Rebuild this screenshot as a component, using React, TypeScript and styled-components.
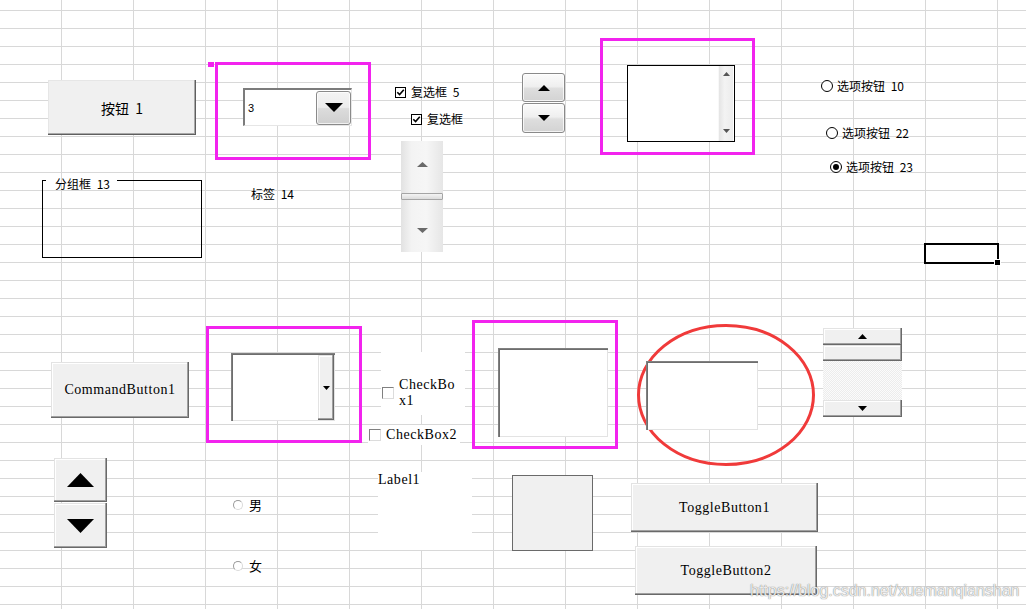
import React from 'react';
import styled, { createGlobalStyle, css } from 'styled-components';

const Global = createGlobalStyle`
  html, body { margin: 0; padding: 0; background: #fff; }
  body {
    width: 1026px; height: 609px; overflow: hidden;
    font-family: "Noto Sans CJK SC", "Noto Sans", sans-serif;
    color: #000;
  }
`;

type Box = { $x: number; $y: number; $w?: number; $h?: number };

const place = css<Box>`
  position: absolute;
  left: ${(p) => p.$x}px;
  top: ${(p) => p.$y}px;
  ${(p) => (p.$w !== undefined ? `width: ${p.$w}px;` : '')}
  ${(p) => (p.$h !== undefined ? `height: ${p.$h}px;` : '')}
  box-sizing: border-box;
`;

const axRaised = css`
  background: #f0f0f0;
  box-shadow: inset -1px -1px 0 #696969, inset -2px -2px 0 #a0a0a0,
    inset 1px 1px 0 #e3e3e3, inset 2px 2px 0 #ffffff;
`;

const axSunken = css`
  background: #fff;
  box-shadow: inset 1px 1px 0 #808080, inset 2px 2px 0 #6e6e6e,
    inset -1px -1px 0 #e3e3e3;
`;

const caption = css`
  font-family: "Liberation Serif", "DejaVu Serif", serif;
  font-size: 14px;
  letter-spacing: 0.55px;
`;

/* ---------- sheet ---------- */
const Sheet = styled.div`
  position: relative;
  width: 1026px;
  height: 609px;
  overflow: hidden;
  background-color: #fff;
  background-image: linear-gradient(to right, #d8d8d8 0 1px, transparent 1px),
    linear-gradient(to bottom, #d8d8d8 0 1px, transparent 1px);
  background-size: 72px 18px;
  background-position: 61px 10px;
`;

/* ---------- generic drawing ---------- */
const TriSvg = styled.svg`
  display: block;
  flex: none;
`;

const Tri = ({ dir, w, h, color = '#000' }: { dir: 'up' | 'down'; w: number; h: number; color?: string }) => (
  <TriSvg width={w} height={h} viewBox={`0 0 ${w} ${h}`}>
    <polygon
      points={dir === 'up' ? `0,${h} ${w / 2},0 ${w},${h}` : `0,0 ${w},0 ${w / 2},${h}`}
      fill={color}
    />
  </TriSvg>
);

/* ---------- annotations ---------- */
const SelectFrame = styled.div<Box>`
  ${place}
  border: 3px solid #f223ee;
`;

const FrameHandle = styled.div<Box>`
  ${place}
  background: #f223ee;
`;

const EllipseSvg = styled.svg<Box>`
  ${place}
  overflow: visible;
`;

/* ---------- form controls ---------- */
const FormButton = styled.div<Box>`
  ${place}
  display: flex;
  align-items: center;
  justify-content: center;
  background: #f0f0f0;
  box-shadow: inset -1px -1px 0 #5f5f5f, inset -2px -2px 0 #a9a9a9, inset 1px 1px 0 #e6e6e6;
  font-size: 14px;
  word-spacing: 3px;
`;

const FormCombo = styled.div<Box>`
  ${place}
  display: flex;
  align-items: center;
  background: #fff;
  border-top: 2px solid #7c7c7c;
  border-left: 2px solid #7c7c7c;
  border-right: 1px solid #e6e6e6;
  border-bottom: 1px solid #e6e6e6;
`;

const ComboValue = styled.span`
  flex: 1;
  padding-left: 3px;
  font-family: "Liberation Sans", Arial, sans-serif;
  font-size: 11px;
`;

const ComboDrop = styled.div`
  width: 35px;
  height: 34px;
  box-sizing: border-box;
  border: 1px solid #8a8a8a;
  border-radius: 3px;
  background: linear-gradient(#f4f4f4, #ececec 48%, #dcdcdc 52%, #cfcfcf);
  box-shadow: inset 0 0 0 1px rgba(255, 255, 255, 0.7);
  display: flex;
  align-items: center;
  justify-content: center;
`;

const FormCheck = styled.div<Box>`
  ${place}
  display: flex;
  align-items: center;
  gap: 5px;
  height: 14px;
  font-size: 12px;
  line-height: 14px;
  word-spacing: 3px;
  white-space: nowrap;
`;

const CheckSquare = styled.span`
  width: 11px;
  height: 11px;
  box-sizing: border-box;
  border: 1px solid #000;
  background: #fff;
  display: flex;
  align-items: center;
  justify-content: center;
`;

const CheckMark = () => (
  <TriSvg width={9} height={9} viewBox="0 0 9 9">
    <path d="M1.3 4.2 L3.6 6.6 L7.8 1.8" fill="none" stroke="#000" strokeWidth={1.6} />
  </TriSvg>
);

const FormVScroll = styled.div<Box>`
  ${place}
  display: flex;
  flex-direction: column;
  background: linear-gradient(to right, #e2e2e2, #f3f3f3 25%, #f6f6f6 60%, #e6e6e6);
`;

const VScrollEnd = styled.div<{ $h: number }>`
  height: ${(p) => p.$h}px;
  flex: none;
  display: flex;
  align-items: center;
  justify-content: center;
`;

const VScrollTrack = styled.div`
  flex: 1;
  display: flex;
  flex-direction: column;
  padding-top: 6px;
`;

const VScrollThumb = styled.div`
  height: 7px;
  box-sizing: border-box;
  border: 1px solid #a5a5a5;
  border-radius: 1px;
  background: linear-gradient(#f4f4f4, #dcdcdc);
`;

const FormSpin = styled.div<Box>`
  ${place}
  display: flex;
  flex-direction: column;
  gap: 1px;
`;

const FormSpinBtn = styled.div<{ $h: number }>`
  height: ${(p) => p.$h}px;
  box-sizing: border-box;
  border: 1px solid #8a8a8a;
  border-radius: 3px;
  background: linear-gradient(#fbfbfb, #efefef 46%, #dedede 54%, #d3d3d3);
  box-shadow: inset 0 0 0 1px rgba(255, 255, 255, 0.75);
  display: flex;
  align-items: center;
  justify-content: center;
`;

const FormList = styled.div<Box>`
  ${place}
  border: 1px solid #000;
  background: #fff;
  display: flex;
  justify-content: flex-end;
  padding-right: 1px;
`;

const ListScroll = styled.div`
  width: 14px;
  background: linear-gradient(to right, #e4e4e4, #f3f3f3 40%, #ececec);
  border-left: 1px solid #f8f8f8;
  display: flex;
  flex-direction: column;
  justify-content: space-between;
  align-items: center;
  padding: 6px 0 8px;
`;

const FormRadio = styled.div<Box>`
  ${place}
  display: flex;
  align-items: center;
  gap: 4px;
  height: 14px;
  font-size: 12px;
  line-height: 14px;
  word-spacing: 3px;
  white-space: nowrap;
`;

const RadioCircle = styled.span<{ $on?: boolean }>`
  width: 12px;
  height: 12px;
  box-sizing: border-box;
  border: 1px solid #000;
  border-radius: 50%;
  background: #fff;
  display: flex;
  align-items: center;
  justify-content: center;
  &::after {
    content: '';
    display: ${(p) => (p.$on ? 'block' : 'none')};
    width: 6px;
    height: 6px;
    border-radius: 50%;
    background: #000;
  }
`;

const GroupBox = styled.fieldset<Box>`
  ${place}
  margin: 0;
  padding: 0;
  border: 1px solid #000;
  min-width: 0;
`;

const GroupLegend = styled.legend`
  margin-left: 3px;
  padding: 8px 7px 0 9px;
  font-size: 12px;
  line-height: 12px;
  word-spacing: 3px;
`;

const PlainLabel = styled.div<Box>`
  ${place}
  font-size: 12px;
  line-height: 14px;
  word-spacing: 3px;
  white-space: nowrap;
`;

const SelectedCell = styled.div<Box>`
  ${place}
  border: 2px solid #000;
  &::after {
    content: '';
    position: absolute;
    right: -4px;
    bottom: -4px;
    width: 5px;
    height: 5px;
    background: #000;
    border: 1px solid #fff;
  }
`;

/* ---------- ActiveX controls ---------- */
const AxButton = styled.div<Box>`
  ${place}
  ${axRaised}
  ${caption}
  display: flex;
  align-items: center;
  justify-content: center;
  white-space: nowrap;
`;

const AxCombo = styled.div<Box>`
  ${place}
  ${axSunken}
  display: flex;
  justify-content: flex-end;
  padding: 2px 1px 1px 0;
`;

const AxDrop = styled.div`
  width: 16px;
  ${axRaised}
  display: flex;
  align-items: center;
  justify-content: center;
`;

const AxTextBox = styled.div<Box>`
  ${place}
  ${axSunken}
`;

const AxCheck = styled.div<Box & { $pt?: number }>`
  ${place}
  padding-top: ${(p) => p.$pt ?? 0}px;
  background: #fff;
  display: flex;
  align-items: center;
  ${caption}
  line-height: 16px;
`;

const AxCheckSquare = styled.span`
  width: 12px;
  height: 12px;
  flex: none;
  margin: 0 5px 0 1px;
  box-sizing: border-box;
  background: #fff;
  border-top: 1px solid #808080;
  border-left: 1px solid #808080;
  border-right: 1px solid #dcdcdc;
  border-bottom: 1px solid #dcdcdc;
`;

const AxCheckText = styled.span<{ $w?: number }>`
  ${(p) => (p.$w ? `width: ${p.$w}px; word-break: break-all;` : 'white-space: nowrap;')}
`;

const AxRadio = styled.div<Box>`
  ${place}
  display: flex;
  align-items: center;
  gap: 6px;
  font-size: 13px;
  line-height: 16px;
`;

const AxRadioCircle = styled.span`
  width: 10px;
  height: 10px;
  box-sizing: border-box;
  border-radius: 50%;
  border: 1px solid #9a9a9a;
  border-right-color: #dadada;
  border-bottom-color: #dadada;
  background: #fff;
`;

const AxLabel = styled.div<Box>`
  ${place}
  background: #fff;
  ${caption}
  line-height: 16px;
`;

const AxImage = styled.div<Box>`
  ${place}
  background: #f0f0f0;
  border: 1px solid #6a6a6a;
`;

const AxScroll = styled.div<Box>`
  ${place}
  display: flex;
  flex-direction: column;
`;

const AxScrollBtn = styled.div<{ $h: number }>`
  height: ${(p) => p.$h}px;
  flex: none;
  ${axRaised}
  display: flex;
  align-items: center;
  justify-content: center;
`;

const AxScrollTrack = styled.div`
  flex: 1;
  background-color: #fff;
  background-image: repeating-conic-gradient(#ececec 0 25%, #fbfbfb 0 50%);
  background-size: 2px 2px;
`;

const AxSpin = styled.div<Box>`
  ${place}
  display: flex;
  flex-direction: column;
  gap: 1px;
`;

const AxSpinBtn = styled.div<{ $h: number }>`
  height: ${(p) => p.$h}px;
  ${axRaised}
  display: flex;
  align-items: center;
  justify-content: center;
`;

const Watermark = styled.div<Box>`
  ${place}
  font-family: "Liberation Sans", Arial, sans-serif;
  font-size: 16px;
  line-height: 18px;
  color: rgba(255, 255, 255, 0.85);
  text-shadow: 0 0 1px rgba(90, 90, 90, 0.6), 0 0 1px rgba(90, 90, 90, 0.6);
  white-space: nowrap;
`;

export default function App() {
  return (
    <>
      <Global />
      <Sheet>
        {/* form button */}
        <FormButton $x={48} $y={80} $w={148} $h={55}>按钮 1</FormButton>

        {/* form combo in frame */}
        <FrameHandle $x={208} $y={62} $w={6} $h={5} />
        <SelectFrame $x={215} $y={62} $w={156} $h={98} />
        <FormCombo $x={243} $y={88} $w={109} $h={38}>
          <ComboValue>3</ComboValue>
          <ComboDrop>
            <Tri dir="down" w={18} h={9} />
          </ComboDrop>
        </FormCombo>

        {/* form checkboxes */}
        <FormCheck $x={395} $y={85}>
          <CheckSquare><CheckMark /></CheckSquare>
          复选框 5
        </FormCheck>
        <FormCheck $x={411} $y={112}>
          <CheckSquare><CheckMark /></CheckSquare>
          复选框
        </FormCheck>

        {/* form scrollbar */}
        <FormVScroll $x={401} $y={141} $w={42} $h={111}>
          <VScrollEnd $h={46}><Tri dir="up" w={11} h={5} color="#6a6a6a" /></VScrollEnd>
          <VScrollTrack><VScrollThumb /></VScrollTrack>
          <VScrollEnd $h={44}><Tri dir="down" w={11} h={5} color="#6a6a6a" /></VScrollEnd>
        </FormVScroll>

        {/* form spin */}
        <FormSpin $x={522} $y={73} $w={43}>
          <FormSpinBtn $h={29}><Tri dir="up" w={12} h={6} /></FormSpinBtn>
          <FormSpinBtn $h={30}><Tri dir="down" w={12} h={6} /></FormSpinBtn>
        </FormSpin>

        {/* form listbox in frame */}
        <SelectFrame $x={600} $y={38} $w={155} $h={117} />
        <FormList $x={627} $y={65} $w={108} $h={77}>
          <ListScroll>
            <Tri dir="up" w={7} h={4} color="#555" />
            <Tri dir="down" w={7} h={4} color="#555" />
          </ListScroll>
        </FormList>

        {/* form radios */}
        <FormRadio $x={821} $y={79}><RadioCircle />选项按钮 10</FormRadio>
        <FormRadio $x={826} $y={126}><RadioCircle />选项按钮 22</FormRadio>
        <FormRadio $x={830} $y={160}><RadioCircle $on />选项按钮 23</FormRadio>

        {/* group box + label */}
        <GroupBox $x={42} $y={170} $w={160} $h={88}>
          <GroupLegend>分组框 13</GroupLegend>
        </GroupBox>
        <PlainLabel $x={251} $y={187}>标签 14</PlainLabel>

        <SelectedCell $x={924} $y={243} $w={75} $h={21} />

        {/* ActiveX controls */}
        <AxButton $x={51} $y={362} $w={138} $h={56}>CommandButton1</AxButton>

        <SelectFrame $x={206} $y={326} $w={156} $h={117} />
        <AxCombo $x={231} $y={353} $w={104} $h={68}>
          <AxDrop><Tri dir="down" w={7} h={4} /></AxDrop>
        </AxCombo>

        <AxCheck $x={381} $y={352} $w={84} $h={63} $pt={18}>
          <AxCheckSquare />
          <AxCheckText $w={58}>CheckBox1</AxCheckText>
        </AxCheck>
        <AxCheck $x={368} $y={425} $w={92} $h={20}>
          <AxCheckSquare />
          <AxCheckText>CheckBox2</AxCheckText>
        </AxCheck>

        <SelectFrame $x={472} $y={320} $w={146} $h={129} />
        <AxTextBox $x={498} $y={348} $w={110} $h={89} />

        <EllipseSvg $x={636} $y={323} $w={180} $h={144} viewBox="0 0 180 144">
          <ellipse cx={90} cy={72} rx={87.5} ry={69.5} fill="none" stroke="#f03a3a" strokeWidth={3} />
        </EllipseSvg>
        <AxTextBox $x={646} $y={361} $w={112} $h={69} />

        <AxScroll $x={823} $y={328} $w={79} $h={89}>
          <AxScrollBtn $h={17}><Tri dir="up" w={9} h={5} /></AxScrollBtn>
          <AxScrollBtn $h={16} />
          <AxScrollTrack />
          <AxScrollBtn $h={17}><Tri dir="down" w={9} h={5} /></AxScrollBtn>
        </AxScroll>

        <AxSpin $x={54} $y={458} $w={53}>
          <AxSpinBtn $h={44}><Tri dir="up" w={27} h={14} /></AxSpinBtn>
          <AxSpinBtn $h={45}><Tri dir="down" w={27} h={14} /></AxSpinBtn>
        </AxSpin>

        <AxRadio $x={233} $y={497}><AxRadioCircle />男</AxRadio>
        <AxRadio $x={233} $y={558}><AxRadioCircle />女</AxRadio>

        <AxLabel $x={378} $y={472} $w={94} $h={78}>Label1</AxLabel>

        <AxImage $x={512} $y={475} $w={81} $h={76} />

        <AxButton $x={631} $y={483} $w={187} $h={49}>ToggleButton1</AxButton>
        <AxButton $x={635} $y={546} $w={182} $h={49}>ToggleButton2</AxButton>

        <Watermark $x={750} $y={582}>https://blog.csdn.net/xuemanqianshan</Watermark>
      </Sheet>
    </>
  );
}
